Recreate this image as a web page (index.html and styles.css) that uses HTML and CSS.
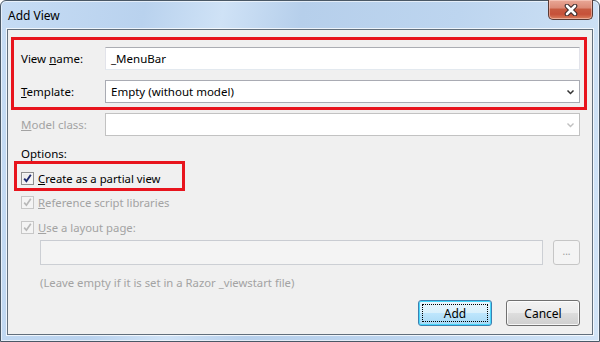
FILE: index.html
```html
<!DOCTYPE html>
<html>
<head>
<meta charset="utf-8">
<link rel="stylesheet" href="styles.css">
</head>
<body>
<div class="window">
  <div class="titlebar">
    <span class="title">Add View</span>
    <div class="close">
      <svg width="18" height="12" viewBox="0 0 18 12">
        <path d="M5 2 L13 10 M13 2 L5 10" stroke="#3b2a2a" stroke-width="4.6" stroke-linecap="round"/>
        <path d="M5 2 L13 10 M13 2 L5 10" stroke="#ffffff" stroke-width="2.6" stroke-linecap="round"/>
      </svg>
    </div>
  </div>
  <div class="client">
    <div class="group highlight-a">
      <div class="row">
        <label class="label">View <u>n</u>ame:</label>
        <div class="textbox">_MenuBar</div>
      </div>
      <div class="row">
        <label class="label"><u>T</u>emplate:</label>
        <div class="combo">Empty (without model)<span class="arrow"><svg width="9" height="6" viewBox="0 0 9 6"><path d="M1.5 1.5 L4.5 4.5 L7.5 1.5" fill="none" stroke="#333" stroke-width="1.5"/></svg></span></div>
      </div>
    </div>
    <div class="row model">
      <label class="label disabled"><u>M</u>odel class:</label>
      <div class="combo off"><span class="arrow"><svg width="9" height="6" viewBox="0 0 9 6"><path d="M1.5 1.5 L4.5 4.5 L7.5 1.5" fill="none" stroke="#c0c0c0" stroke-width="1.4"/></svg></span></div>
    </div>
    <div class="options">Options:</div>
    <div class="check highlight-b">
      <span class="box on"><svg width="11" height="11" viewBox="0 0 11 11"><path d="M2.2 5.6 L4.4 8.2 L8.8 1.8" fill="none" stroke="#1d2a6e" stroke-width="1.9"/></svg></span>
      <span><u>C</u>reate as a partial view</span>
    </div>
    <div class="check disabled">
      <span class="box"><svg width="11" height="11" viewBox="0 0 11 11"><path d="M2.2 5.6 L4.4 8.2 L8.8 1.8" fill="none" stroke="#b8b8b8" stroke-width="1.7"/></svg></span>
      <span><u>R</u>eference script libraries</span>
    </div>
    <div class="check disabled third">
      <span class="box"><svg width="11" height="11" viewBox="0 0 11 11"><path d="M2.2 5.6 L4.4 8.2 L8.8 1.8" fill="none" stroke="#b8b8b8" stroke-width="1.7"/></svg></span>
      <span><u>U</u>se a layout page:</span>
    </div>
    <div class="layout-row">
      <div class="textbox off"></div>
      <div class="browse">...</div>
    </div>
    <div class="hint">(Leave empty if it is set in a Razor _viewstart file)</div>
    <div class="buttons">
      <div class="btn default"><span class="focus">Add</span></div>
      <div class="btn">Cancel</div>
    </div>
  </div>
</div>
</body>
</html>
```
FILE: styles.css
```css
* { box-sizing: border-box; }
html, body { margin: 0; padding: 0; }
body {
  width: 600px; height: 342px; overflow: hidden;
  font-family: "Noto Sans", "Open Sans", sans-serif;
  font-size: 11.3px; color: #000;
}
.window {
  width: 600px; height: 342px;
  border: 1px solid #4a5866;
  border-radius: 6px 6px 0 0;
  background: linear-gradient(100deg, #c6dcf4 0%, #b9d2ee 22%, #cfe2f6 34%, #b6cfeb 46%, #bdd5ef 70%, #d2e4f7 100%);
  display: flex; flex-direction: column;
  box-shadow: inset 0 0 0 1px rgba(255,255,255,0.6);
}
.titlebar {
  height: 28px; display: flex; align-items: flex-start;
  padding-left: 7px; position: relative;
}
.title { margin-top: 6px; font-size: 12px; color: #000; }
.close {
  margin-left: auto; margin-right: 6px; margin-top: -1px;
  width: 45px; height: 20px;
  border: 1px solid #5a3a34; border-top: none;
  border-radius: 0 0 5px 5px;
  background: linear-gradient(#e9a897 0%, #dc8b77 40%, #c75a40 50%, #c65139 75%, #d9805e 100%);
  display: flex; align-items: center; justify-content: center;
  box-shadow: inset 0 0 0 1px rgba(255,220,210,0.5);
}
.client {
  flex: 1; margin: 0 6px 6px 6px;
  background: #f0f0f0;
  border: 1px solid #626f7c;
  box-shadow: 0 0 0 1px rgba(255,255,255,0.75);
  padding: 17px 12px 0 13px;
  display: flex; flex-direction: column;
  position: relative;
}
.group { display: flex; flex-direction: column; gap: 10px; position: relative; }
.highlight-a::after {
  content: ""; position: absolute;
  left: -10px; top: -10px; right: -7px; bottom: -7px;
  border: 3px solid #e8141d;
  pointer-events: none;
}
.row { display: flex; align-items: center; height: 23px; font-size: 11.5px; }
.model { margin-top: 10px; }
.label { width: 84px; flex: none; }
.disabled { color: #a3a3a3; }
.textbox, .combo {
  flex: 1; height: 23px; background: #fff;
  display: flex; align-items: center; padding-left: 5px;
}
.textbox {
  border: 1px solid #e2e3ea; border-top-color: #abadb3; border-bottom-color: #e3e9ef;
}
.textbox.off { border-color: #cccfd4; border-top-color: #c9ccd2; background: #f4f4f4; }
.combo { border: 1px solid #a9abb3; position: relative; }
.combo.off { border-color: #c2c2c2; }
.arrow { margin-left: auto; width: 17px; display: flex; justify-content: center; }
.options { margin-top: 10px; height: 15px; line-height: 15px; font-size: 11.5px; }
.check {
  display: flex; align-items: center; gap: 4px; height: 16px; margin-top: 9px;
  position: relative; align-self: flex-start;
}
.check + .check { margin-top: 8px; }
.check.third { margin-top: 9px; }
.highlight-b::after {
  content: ""; position: absolute;
  left: -7px; top: -9px; right: -25px; bottom: -5px;
  border: 3px solid #e8141d;
  pointer-events: none;
}
.box {
  width: 13px; height: 13px; flex: none;
  border: 1px solid #8e8f8f;
  background: linear-gradient(135deg, #e6e6e6, #fdfdfd);
  box-shadow: inset 0 0 0 1px #f4f4f4;
  display: flex; align-items: center; justify-content: center;
}
.check.disabled .box { border-color: #c7c7c7; background: #f4f4f4; }
.layout-row { display: flex; gap: 10px; margin: 5px 0 0 19px; height: 25px; }
.layout-row .textbox { height: 25px; }
.browse {
  width: 27px; height: 25px; border: 1px solid #c6c6c6; border-radius: 3px;
  background: #f4f4f4; color: #9a9a9a; font-size: 10px;
  display: flex; align-items: center; justify-content: center; padding-bottom: 3px;
}
.hint { margin: 10px 0 0 19px; color: #a3a3a3; height: 16px; line-height: 16px; }
.buttons { display: flex; justify-content: flex-end; gap: 14px; margin-top: 9px; }
.btn {
  width: 74px; height: 26px;
  border: 1px solid #707070; border-radius: 3px;
  background: linear-gradient(#f2f2f2 0%, #ebebeb 50%, #dddddd 51%, #cfcfcf 100%);
  box-shadow: inset 0 0 0 1px rgba(255,255,255,0.8);
  display: flex; align-items: center; justify-content: center;
  font-size: 12px;
}
.btn.default {
  border-color: #3c7fb1;
  background: linear-gradient(#eaf6fd 0%, #d9f0fc 50%, #bee6fd 51%, #a7d9f5 100%);
  box-shadow: inset 0 0 0 1px #48d8fb;
  padding: 3px;
}
.focus {
  width: 100%; height: 100%;
  border: 1px dotted #000;
  display: flex; align-items: center; justify-content: center;
}
```
